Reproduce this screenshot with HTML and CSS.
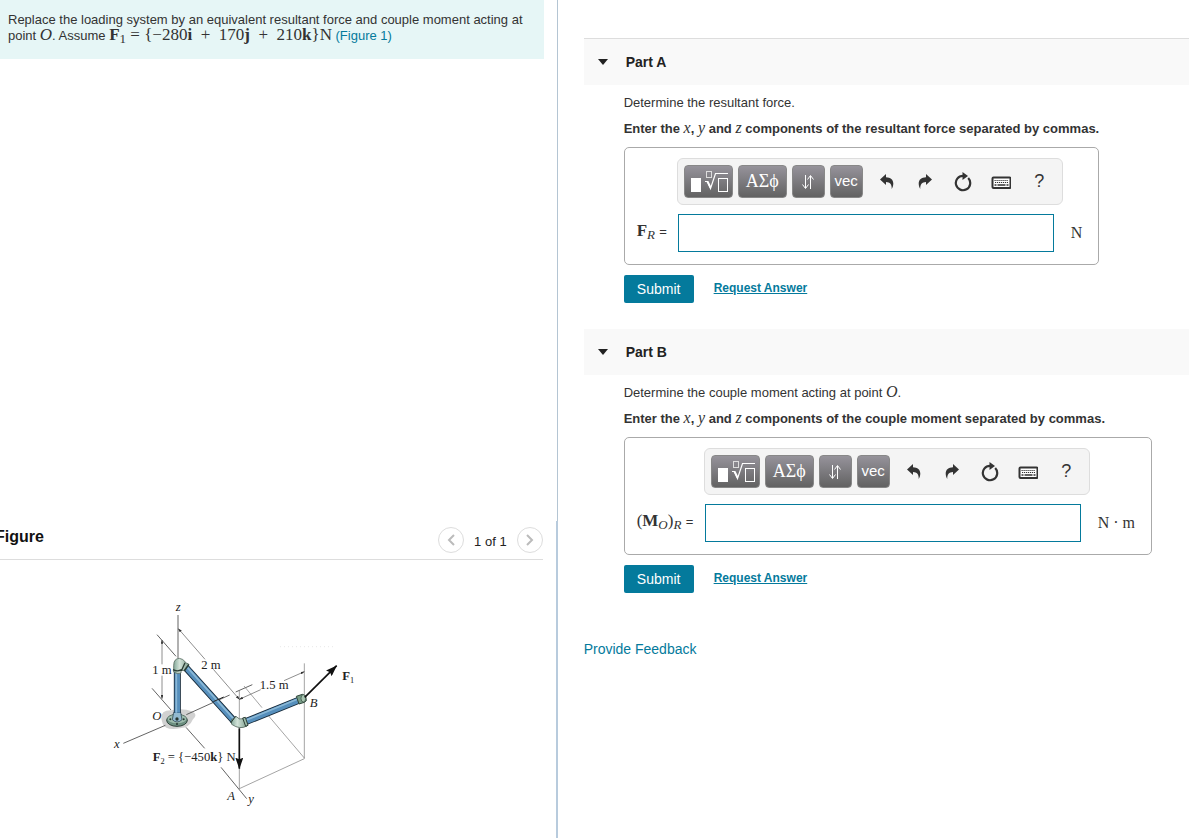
FILE: index.html
```html
<!DOCTYPE html>
<html lang="en">
<head>
    <meta charset="UTF-8">
    <meta name="viewport" content="width=device-width, initial-scale=1.0">
    <title>Equivalent Resultant Force</title>
    <link rel="stylesheet" href="styles.css">
</head>
<body>

    <!-- shared toolbar icons -->
    <svg class="sprite" aria-hidden="true">
        <symbol id="icon-template" viewBox="-2 2 40 24">
            <rect x="1" y="10" width="10" height="14" fill="#fff"/>
            <g fill="none" stroke="#fff">
                <rect x="16.500" y="3.500" width="5" height="6" stroke="#ddd"/>
                <path d="M15 13.500h2.500l3 7L25.500 5.500H38" stroke-width="1.200"/>
                <path d="M17.500 13.500l3 6" stroke-width="2"/>
                <rect x="28.500" y="10.500" width="9" height="13"/>
            </g>
        </symbol>
        <symbol id="icon-arrows" viewBox="0 0 14 16">
            <g fill="none" stroke="#fff">
                <path d="M4.500 1v13M1.500 10.500l3 4 3-4"/>
                <path d="M9.500 15V2M6.500 5.500l3-4 3 4"/>
            </g>
        </symbol>
        <symbol id="icon-undo" viewBox="0 0 16 16">
            <path d="M1 5.500L7 0v3.200c4.500.1 7.300 2.300 7.300 6.300 0 2.200-.6 4-1.600 5.500.3-4.500-1.700-6.700-5.700-6.900V11z" fill="#333"/>
        </symbol>
        <symbol id="icon-redo" viewBox="0 0 16 16">
            <path d="M15 5.500L9 0v3.200C4.500 3.300 1.700 5.500 1.700 9.500c0 2.200.6 4 1.600 5.500C3 10.500 5 8.300 9 8.100V11z" fill="#333"/>
        </symbol>
        <symbol id="icon-reset" viewBox="0 0 18 20">
            <path d="M14.200 6A7.200 7.200 0 1 1 9 3.800" fill="none" stroke="#333" stroke-width="2.200"/>
            <path d="M8.500 0l5.500 4-5.500 4z" fill="#333"/>
        </symbol>
        <symbol id="icon-keyboard" viewBox="0 0 20 14">
            <rect x="1.500" y="1.500" width="18" height="10.500" rx="1" fill="#fff" stroke="#333" stroke-width="2"/>
            <path d="M3.500 4.500h14M4 6.500h13" stroke="#333" stroke-width="1.200" stroke-dasharray="1.200 .8"/>
            <path d="M3.500 9h2M6.500 9h8M15.500 9h2" stroke="#333" stroke-width="1.500"/>
        </symbol>
    </svg>

    <div class="page">
        <div class="left">
            <section class="problem-pane">
                <p class="problem">Replace the loading system by an equivalent resultant force and couple moment acting at point <span class="math"><i>O</i></span>. Assume <span class="math"><b>F</b><sub>1</sub> = {−280<b>i</b>&nbsp; + &nbsp;170<b>j</b>&nbsp; + &nbsp;210<b>k</b>}N</span> <a href="#figure">(Figure 1)</a></p>
            </section>

            <section class="figure-pane" id="figure">
                <header class="figure-header">
                    <h2>Figure</h2>
                    <div class="pager">
                        <button type="button" aria-label="Previous figure">
                            <svg width="10" height="12" viewBox="0 0 10 12"><path d="M8 1L3 6l5 5" fill="none" stroke="#bbb" stroke-width="2"/></svg>
                        </button>
                        <span>1 of 1</span>
                        <button type="button" aria-label="Next figure">
                            <svg width="10" height="12" viewBox="0 0 10 12"><path d="M2 1l5 5-5 5" fill="none" stroke="#bbb" stroke-width="2"/></svg>
                        </button>
                    </div>
                </header>

                <svg class="diagram" viewBox="0 0 840 660" role="img" aria-label="Pipe assembly loaded at A and B">
                    <defs>
                        <marker id="dim" viewBox="0 0 12 8" refX="11" refY="4" markerWidth="12" markerHeight="8" markerUnits="userSpaceOnUse" orient="auto-start-reverse">
                            <path d="M0 0l12 4-12 4z" fill="#333"/>
                        </marker>
                        <marker id="force" viewBox="0 0 34 24" refX="33" refY="12" markerWidth="34" markerHeight="24" markerUnits="userSpaceOnUse" orient="auto">
                            <path d="M0 0l34 12L0 24l5-12z" fill="#111"/>
                        </marker>
                        <linearGradient id="joint" x1="0" x2="1">
                            <stop offset="0" stop-color="#84a99a"/>
                            <stop offset=".4" stop-color="#d3e3d9"/>
                            <stop offset="1" stop-color="#7fa08f"/>
                        </linearGradient>
                    </defs>

                    <!-- base shadow -->
                    <path d="M184 386q-2-26 30-25 34-8 62 3 20 10 2 25-8 22-38 26-43 8-52-14z" fill="#d1d1d1"/>

                    <!-- axes and dimension lines -->
                    <g fill="none" stroke="#444" stroke-width="2.500">
                        <path d="M234 75v130M70 460l126-54M259 374l130-59M407 306l50-22"/>
                        <path d="M156 295l57 65M258 412l56 63M363 532l77 94"/>
                        <path d="M171 134l57 65"/>
                        <path d="M418 302v295M613 220v286L418 596" stroke="#777" stroke-width="2"/>
                        <path d="M432 288l54 65M506 378l107 126" stroke="#777" stroke-width="2"/>
                    </g>
                    <g fill="none" stroke="#555" stroke-width="2">
                        <path d="M186 223v-73" marker-end="url(#dim)"/>
                        <path d="M186 257v69" marker-end="url(#dim)"/>
                        <path d="M315 208l-80-92" marker-end="url(#dim)"/>
                        <path d="M340 238l78 90" marker-end="url(#dim)"/>
                        <path d="M482 299l-64 29" marker-end="url(#dim)"/>
                        <path d="M552 272l61-27" marker-end="url(#dim)"/>
                        <path d="M540 170h160" stroke="#ddd" stroke-dasharray="3 9"/>
                    </g>

                    <!-- flange at O -->
                    <ellipse cx="231" cy="391" rx="31" ry="18" fill="#6f9384" stroke="#283e35" stroke-width="3"/>
                    <ellipse cx="231" cy="387" rx="29" ry="14" fill="#9dbcad" stroke="#476458"/>
                    <path d="M221 367h21l4 22q-15 14-29 0z" fill="#93bad0" stroke="#20323f" stroke-width="2"/>
                    <g fill="#26352f"><circle cx="231" cy="387" r="5"/><circle cx="211" cy="388" r="3"/><circle cx="251" cy="388" r="3"/><circle cx="231" cy="402" r="3"/></g>

                    <!-- pipes -->
                    <g fill="none">
                        <path d="M232 246v122M257 232l144 160M440 394l160-65" stroke="#172a3a" stroke-width="21"/>
                        <path d="M232 246v122M257 232l144 160M440 394l160-65" stroke="#568fbc" stroke-width="16"/>
                        <path d="M229 246v122M259 229l144 160M439 390l160-65" stroke="#8ab8d6" stroke-width="5"/>
                    </g>
                    <path d="M221 246v-20q0-20 17-21 10 0 21 14l7 3-15 20-8-1v8q-11 5-22-3z" fill="url(#joint)" stroke="#42564b" stroke-width="2"/>
                    <path d="M219 239q12 7 26 0M255 218l-11 25M267 223l-14 20" fill="none" stroke="#2b3d34" stroke-width="4"/>
                    <path d="M393 391l15-12q9 12 22 7l11 22q-22 12-46-5z" fill="url(#joint)" stroke="#30463b" stroke-width="2"/>
                    <path d="M392 399l15-20M428 384l9 25 7-3-8-24z" fill="#9bbba9" stroke="#2b3d34" stroke-width="3"/>
                    <path d="M589 319l18-6 10 5 2 14-6 5-16 5z" fill="#779d86" stroke="#30463b" stroke-width="3"/>
                    <ellipse cx="610" cy="325" rx="7" ry="11" fill="#a5c3af" stroke="#30463b" stroke-width="2"/>
                    <path d="M340 335l31-14" stroke="#222" stroke-width="3"/>

                    <!-- forces -->
                    <path d="M418 415v121" stroke="#111" stroke-width="5" marker-end="url(#force)"/>
                    <path d="M614 322l96-95" stroke="#111" stroke-width="5" marker-end="url(#force)"/>

                    <g class="diagram-text">
                        <text x="227" y="63" font-style="italic">z</text>
                        <text x="157" y="251">1 m</text>
                        <text x="304" y="237">2 m</text>
                        <text x="479" y="297">1.5 m</text>
                        <text x="157" y="391" font-style="italic">O</text>
                        <text x="42" y="475" font-style="italic">x</text>
                        <text x="629" y="352" font-style="italic">B</text>
                        <text x="382" y="630" font-style="italic">A</text>
                        <text x="445" y="640" font-style="italic">y</text>
                        <text x="727" y="271"><tspan font-weight="bold">F</tspan><tspan dy="7" font-size="25">1</tspan></text>
                        <text x="158" y="514"><tspan font-weight="bold">F</tspan><tspan dy="7" font-size="25">2</tspan><tspan dy="-7"> = {−450</tspan><tspan font-weight="bold">k</tspan>} N</text>
                    </g>
                </svg>
            </section>
        </div>

        <main class="right">
            <section class="part">
                <h3 class="part-title">Part A</h3>
                <form class="part-body">
                    <p>Determine the resultant force.</p>
                    <p class="instructions">Enter the <span class="math"><i>x</i></span>, <span class="math"><i>y</i></span> and <span class="math"><i>z</i></span> components of the resultant force separated by commas.</p>
                    <div class="answer-box answer-force">
                        <label class="math" for="answerA"><b>F</b><sub><i>R</i></sub> <span class="equals">=</span></label>
                        <div class="editor">
                            <div class="toolbar">
                                <button type="button" class="key wide" aria-label="Templates"><svg width="40" height="24"><use href="#icon-template"/></svg></button>
                                <button type="button" class="key wide greek">ΑΣϕ</button>
                                <button type="button" class="key" aria-label="Arrows"><svg width="14" height="16"><use href="#icon-arrows"/></svg></button>
                                <button type="button" class="key vec">vec</button>
                                <div class="tools">
                                    <button type="button" aria-label="Undo"><svg width="16" height="16"><use href="#icon-undo"/></svg></button>
                                    <button type="button" aria-label="Redo"><svg width="16" height="16"><use href="#icon-redo"/></svg></button>
                                    <button type="button" aria-label="Reset"><svg width="18" height="20"><use href="#icon-reset"/></svg></button>
                                    <button type="button" aria-label="Keyboard shortcuts"><svg class="keyboard" width="20" height="14"><use href="#icon-keyboard"/></svg></button>
                                    <button type="button">?</button>
                                </div>
                            </div>
                            <div class="field">
                                <input type="text" id="answerA">
                                <span class="math">N</span>
                            </div>
                        </div>
                    </div>
                    <div class="actions">
                        <button type="submit" class="submit-btn">Submit</button>
                        <a href="#">Request Answer</a>
                    </div>
                </form>
            </section>

            <section class="part">
                <h3 class="part-title">Part B</h3>
                <form class="part-body">
                    <p>Determine the couple moment acting at point <span class="math"><i>O</i></span>.</p>
                    <p class="instructions">Enter the <span class="math"><i>x</i></span>, <span class="math"><i>y</i></span> and <span class="math"><i>z</i></span> components of the couple moment separated by commas.</p>
                    <div class="answer-box answer-moment">
                        <label class="math" for="answerB">(<b>M</b><sub><i>O</i></sub>)<sub><i>R</i></sub> <span class="equals">=</span></label>
                        <div class="editor">
                            <div class="toolbar">
                                <button type="button" class="key wide" aria-label="Templates"><svg width="40" height="24"><use href="#icon-template"/></svg></button>
                                <button type="button" class="key wide greek">ΑΣϕ</button>
                                <button type="button" class="key" aria-label="Arrows"><svg width="14" height="16"><use href="#icon-arrows"/></svg></button>
                                <button type="button" class="key vec">vec</button>
                                <div class="tools">
                                    <button type="button" aria-label="Undo"><svg width="16" height="16"><use href="#icon-undo"/></svg></button>
                                    <button type="button" aria-label="Redo"><svg width="16" height="16"><use href="#icon-redo"/></svg></button>
                                    <button type="button" aria-label="Reset"><svg width="18" height="20"><use href="#icon-reset"/></svg></button>
                                    <button type="button" aria-label="Keyboard shortcuts"><svg class="keyboard" width="20" height="14"><use href="#icon-keyboard"/></svg></button>
                                    <button type="button">?</button>
                                </div>
                            </div>
                            <div class="field">
                                <input type="text" id="answerB">
                                <span class="math">N · m</span>
                            </div>
                        </div>
                    </div>
                    <div class="actions">
                        <button type="submit" class="submit-btn">Submit</button>
                        <a href="#">Request Answer</a>
                    </div>
                </form>
            </section>

            <a class="feedback" href="#">Provide Feedback</a>
        </main>
    </div>

</body>
</html>
```
FILE: styles.css
```css
* {
    box-sizing: border-box;
}
body {
    margin: 0;
    font-family: "Liberation Sans", Arial, sans-serif;
    font-size: 13px;
    line-height: 16px;
    color: #333;
    background-color: #fff;
}
h2, h3, p {
    margin: 0;
}
a {
    color: #047a9c;
}
button {
    font-family: inherit;
    padding: 0;
    cursor: pointer;
}
.sprite {
    display: none;
}
.page {
    display: grid;
    grid-template-columns: 46.9% 1fr;
    min-height: 100vh;
}

/* Left side */
.left {
    display: grid;
    grid-template-rows: 62.2% 1fr;
    min-width: 0;
    height: 100vh;
}
.problem-pane {
    border-right: 1px solid #b4c5d3;
    padding-right: 13px;
}
.problem {
    background-color: #e6f6f6;
    padding: 12px 8px 15px;
}
.problem a {
    text-decoration: none;
}
.math {
    font-family: "Liberation Serif", "Times New Roman", serif;
    font-size: 17px;
    font-weight: normal;
    line-height: 16px;
}
p .math {
    font-size: 16px;
    line-height: 0;
}
.problem .math {
    font-size: 17px;
}
.math sub {
    font-size: 13px;
    line-height: 0;
    vertical-align: -3px;
}
.figure-pane {
    border-right: 2px solid #b8cbdd;
    overflow: hidden;
    padding-right: 13px;
}
.figure-header {
    display: flex;
    justify-content: space-between;
    align-items: center;
    height: 39px;
    border-bottom: 1px solid #ddd;
}
.figure-header h2 {
    font-size: 16px;
    color: #111;
    margin: 0 0 6px -5px;
}
.pager {
    display: flex;
    align-items: center;
    gap: 10px;
    font-size: 13px;
    color: #222;
}
.pager span {
    padding-top: 3px;
}
.pager button {
    display: flex;
    align-items: center;
    justify-content: center;
    width: 26px;
    height: 26px;
    border: 1px solid #ddd;
    border-radius: 50%;
    background-color: #fff;
}
.diagram {
    display: block;
    width: 280px;
    height: 220px;
    margin: 30px 0 0 100px;
}
.diagram-text {
    font-family: "Liberation Serif", "Times New Roman", serif;
    font-size: 38px;
    fill: #222;
}

/* Right side */
.right {
    padding: 38px 0 20px 26px;
    min-width: 0;
}
.part {
    margin-bottom: 26px;
}
.part-title {
    display: flex;
    align-items: center;
    gap: 18px;
    height: 46px;
    padding-left: 14px;
    background-color: #f9f9f9;
    font-size: 14px;
    color: #222;
}
.part:first-child .part-title {
    height: 47px;
    border-top: 1px solid #ddd;
}
.part-title::before {
    content: "";
    border: 5px solid transparent;
    border-top: 6px solid #222;
    border-bottom: 0;
}
.part-body {
    padding: 10px 0 0 40px;
}
.part-body p {
    margin-bottom: 10px;
}
.part-body .instructions {
    font-weight: bold;
}
.answer-box {
    display: flex;
    align-items: flex-end;
    width: fit-content;
    border: 1px solid #aaa;
    border-radius: 5px;
    padding: 10px 16px 12px 12px;
}
.answer-box label {
    padding-bottom: 12px;
}
.answer-force label {
    width: 40px;
}
.answer-moment label {
    width: 67px;
}
.equals {
    font-family: "Liberation Sans", Arial, sans-serif;
    font-size: 13px;
}
.toolbar {
    display: flex;
    align-items: center;
    gap: 5px;
    width: 386px;
    border: 1px solid #ddd;
    border-radius: 6px;
    background-color: #f4f4f4;
    padding: 6px;
}
.key {
    display: flex;
    align-items: center;
    justify-content: center;
    width: 33px;
    height: 33px;
    border: 1px solid #888;
    border-radius: 4px;
    background: linear-gradient(#96939b, #626262);
    color: #fff;
    font-size: 15px;
}
.key.wide {
    width: 49px;
}
.key.greek {
    font-family: "Liberation Serif", "Times New Roman", serif;
    font-size: 18px;
}
.key.vec {
    padding-bottom: 3px;
}
.tools {
    display: flex;
    gap: 5px;
    padding-left: 3px;
}
.tools button {
    display: flex;
    align-items: center;
    justify-content: center;
    width: 33px;
    height: 33px;
    border: none;
    background: none;
    color: #333;
    font-size: 18px;
}
.keyboard {
    margin-top: 3px;
}
.field {
    display: flex;
    align-items: center;
    gap: 17px;
    margin: 9px 0 0 1px;
}
.field .math {
    font-size: 16px;
}
.field input {
    width: 376px;
    height: 38px;
    border: 1px solid #047a9c;
    padding: 0 8px;
    font-size: 16px;
}
.actions {
    display: flex;
    align-items: center;
    gap: 20px;
    margin-top: 10px;
}
.submit-btn {
    width: 70px;
    height: 28px;
    border: none;
    border-radius: 2px;
    background-color: #047a9c;
    color: #fff;
    font-size: 14px;
}
.actions a {
    padding-bottom: 3px;
    font-size: 12px;
    font-weight: bold;
}
.feedback {
    display: inline-block;
    margin-top: 22px;
    font-size: 14px;
    text-decoration: none;
}
```
